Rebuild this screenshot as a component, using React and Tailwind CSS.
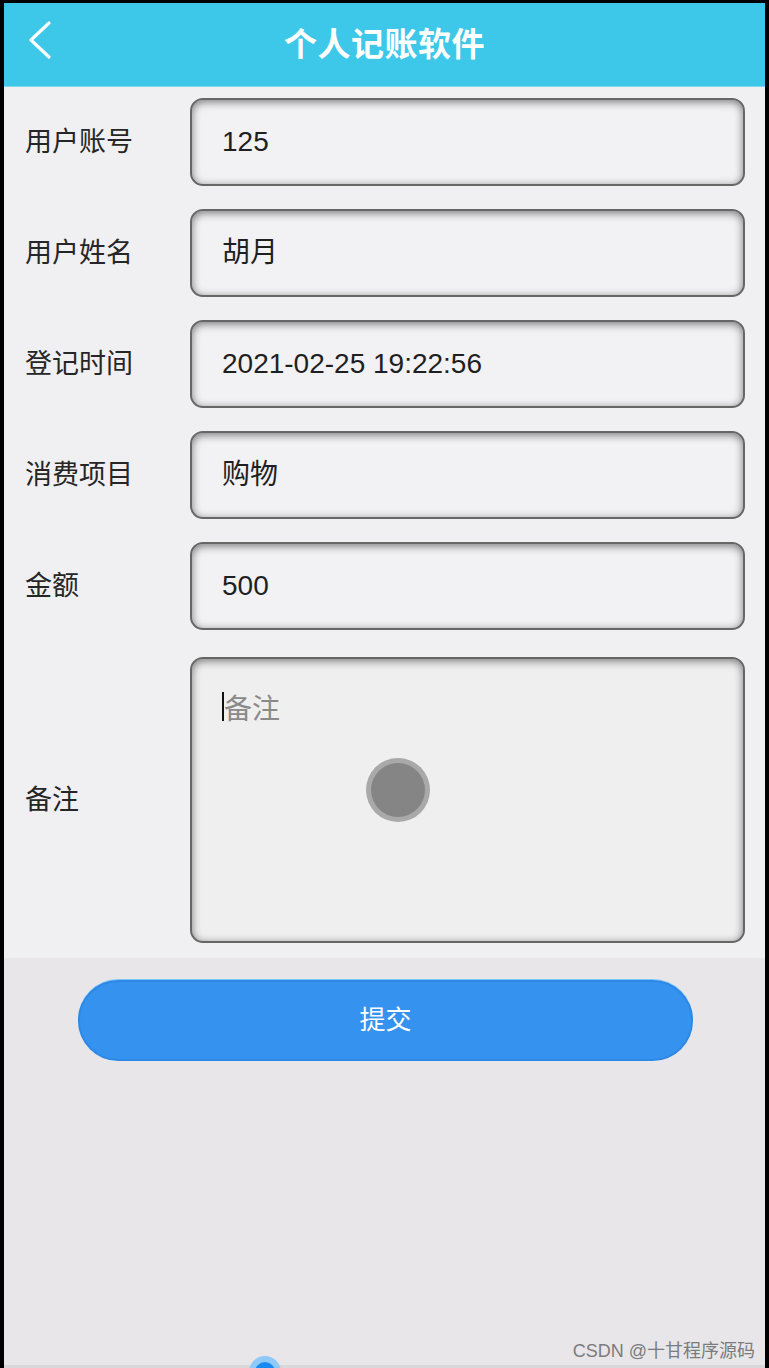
const fields = [
  { label: '用户账号', value: '125' },
  { label: '用户姓名', value: '胡月' },
  { label: '登记时间', value: '2021-02-25 19:22:56' },
  { label: '消费项目', value: '购物' },
  { label: '金额', value: '500' },
];

const font = { fontFamily: '"Liberation Sans", "Noto Sans CJK SC", sans-serif' };

const App = () => {
  return (
    <div className="w-[769px] h-[1368px] bg-black pt-[3px] pl-[4px] pr-[4px] overflow-hidden" style={font}>
      <div className="relative w-[761px] h-[1365px] flex flex-col bg-[#e8e6e9] overflow-hidden">
        {/* 顶部标题栏 */}
        <header className="relative h-[84px] shrink-0 bg-[#3dc7e9] border-b border-[#7fd8ee] flex items-center justify-center">
          <button className="absolute left-[22px] top-[16px]">
            <svg width="30" height="42" viewBox="0 0 30 42" fill="none">
              <polyline points="23,4 5,21 23,38" stroke="#ffffff" strokeWidth="3.2" strokeLinecap="round" strokeLinejoin="round" />
            </svg>
          </button>
          <h1 className="text-white text-[33px] font-bold tracking-[0.5px]">个人记账软件</h1>
        </header>

        {/* 表单 */}
        <section className="bg-[#f0eff1] pt-[11px] pb-[15px] pl-[21px] pr-[20px] flex flex-col gap-[23px]">
          {fields.map((f) => (
            <div key={f.label} className="flex items-center">
              <label className="w-[165px] shrink-0 text-[27px] text-[#262626]">{f.label}</label>
              <div className="flex-1 h-[88px] rounded-[13px] border-2 border-[#666666] bg-[#f2f1f3] shadow-[inset_0_2px_9px_rgba(0,0,0,0.5)] flex items-center pl-[30px] text-[28px] text-[#1f1f1f]">
                {f.value}
              </div>
            </div>
          ))}
          <div className="flex items-center mt-[4px]">
            <label className="w-[165px] shrink-0 text-[27px] text-[#262626]">备注</label>
            <div className="relative flex-1 h-[286px] rounded-[13px] border-2 border-[#666666] bg-[#f0eff0] shadow-[inset_0_2px_9px_rgba(0,0,0,0.5)] pl-[32px] pt-[30px]">
              <span className="absolute left-[30px] top-[33px] w-[2px] h-[29px] bg-[#111]" />
              <span className="text-[28px] text-[#8a8a8a]">备注</span>
            </div>
          </div>
        </section>

        {/* 提交按钮 */}
        <div className="flex-1 flex flex-col items-center pt-[22px] border-b-[3px] border-[#dad8db]">
          <button className="w-[615px] h-[81px] rounded-full bg-[#3592ef] border-2 border-[#2e88e6] shadow-[0_-1px_0_#7cc6f5] text-white text-[26px] ml-[2px]">
            提交
          </button>
        </div>

        {/* 触摸指示 */}
        <div className="absolute left-[362px] top-[755px] w-[64px] h-[64px] rounded-full bg-[#a9a9a9] flex items-center justify-center">
          <div className="w-[54px] h-[54px] rounded-full bg-[#858585]" />
        </div>
        <div className="absolute left-[245px] top-[1353px] w-[32px] h-[32px] rounded-full bg-[#8fc9f8] flex items-center justify-center">
          <div className="w-[20px] h-[20px] rounded-full bg-[#168af0]" />
        </div>

        {/* 水印 */}
        <span className="absolute right-[10px] top-[1335px] text-[18px] text-[#7c7c7c]">CSDN @十甘程序源码</span>
      </div>
    </div>
  );
};

export default App;
